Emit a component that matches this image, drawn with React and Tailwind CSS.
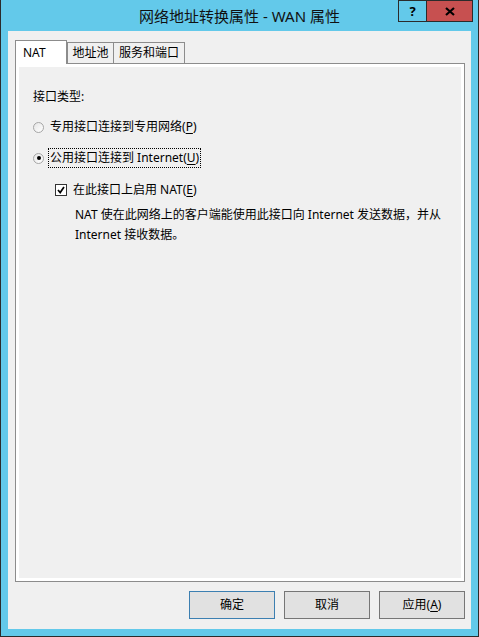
const FONT = "font-['Noto_Sans','Noto_Sans_CJK_SC',sans-serif]"

function Radio({ checked }) {
  return (
    <span className="flex h-[11px] w-[11px] shrink-0 items-center justify-center rounded-full border border-[#a6a6a6] bg-gradient-to-br from-[#e6e6e6] to-white">
      {checked && <span className="h-[4px] w-[4px] rounded-full bg-black" />}
    </span>
  )
}

function CheckBox() {
  return (
    <span className="flex h-[12px] w-[12px] shrink-0 items-center justify-center border border-[#333333] bg-white">
      <svg width="10" height="10" viewBox="0 0 10 10">
        <path d="M2 5 L4.2 7.5 L8 2" fill="none" stroke="#000" strokeWidth="1.7" />
      </svg>
    </span>
  )
}

function Key({ k }) {
  return (
    <>
      (<span className="underline underline-offset-2">{k}</span>)
    </>
  )
}

function Tab({ label, active, className = '' }) {
  if (active) {
    return (
      <div className={`relative z-10 -mb-px flex h-[24px] items-center border border-b-0 border-[#8c8c8c] bg-white pl-[7px] ${className}`}>
        {label}
      </div>
    )
  }
  return (
    <div className={`flex h-[21px] items-center justify-center border border-b-0 border-[#8c8c8c] bg-[#f0f0f0] ${className}`}>
      {label}
    </div>
  )
}

function DialogButton({ children, primary }) {
  return (
    <button
      className={`flex h-[28px] w-[86px] items-center justify-center border bg-[#e1e1e1] text-[12px] leading-[16px] ${
        primary ? 'border-[#3c7fb1]' : 'border-[#767676]'
      }`}
    >
      {children}
    </button>
  )
}

export default function App() {
  return (
    <div className={`flex h-[637px] w-[479px] flex-col border border-t-0 border-[#2b2b2b] bg-[#63c9ea] text-black ${FONT}`}>
      {/* caption */}
      <div className="relative flex h-[31px] items-center justify-center">
        <span className="text-[15px] leading-[20px] text-[#111]">网络地址转换属性 - WAN 属性</span>
        <div className="absolute right-[5px] top-0 flex h-[22px]">
          <div className="flex w-[29px] items-center justify-center border border-[#2b2b2b] text-[13px] font-bold leading-none">?</div>
          <div className="-ml-px flex w-[47px] items-center justify-center border border-[#2b2b2b] bg-[#c75050]">
            <svg width="10" height="9" viewBox="0 0 10 9">
              <path d="M1 1 L9 8 M9 1 L1 8" stroke="#000" strokeWidth="2.2" />
            </svg>
          </div>
        </div>
      </div>

      {/* client area */}
      <div className="mx-[7px] flex h-[598px] flex-col bg-[#f0f0f0] pl-[7px] pr-[6px] pt-[9px] text-[12px]">
        <div className="flex h-[23px] items-end">
          <Tab label="NAT" active className="w-[52px]" />
          <Tab label="地址池" className="w-[47px]" />
          <Tab label="服务和端口" className="-ml-px w-[72px]" />
        </div>

        <div className="flex h-[519px] flex-col border border-[#8c8c8c] bg-white p-[3px]">
          <div className="flex-1 bg-[#f0f0f0] pl-[14px] pt-[22px]">
            <div className="leading-[16px]">接口类型:</div>

            <div className="mt-[12px] flex h-[20px] items-center">
              <Radio />
              <span className="ml-[4px] border border-transparent px-px leading-[18px]">
                专用接口连接到专用网络<Key k="P" />
              </span>
            </div>

            <div className="mt-[11px] flex h-[20px] items-center">
              <Radio checked />
              <span className="ml-[4px] border border-dotted border-black px-px leading-[18px]">
                公用接口连接到 Internet<Key k="U" />
              </span>
            </div>

            <div className="ml-[22px] mt-[12px] flex h-[20px] items-center">
              <CheckBox />
              <span className="ml-[6px] leading-[18px]">
                在此接口上启用 NAT<Key k="E" />
              </span>
            </div>

            <p className="ml-[42px] mt-[5px] leading-[20px]">
              NAT 使在此网络上的客户端能使用此接口向 Internet 发送数据，并从
              <br />
              Internet 接收数据。
            </p>
          </div>
        </div>

        <div className="mt-[9px] flex justify-end gap-[9px]">
          <DialogButton primary>确定</DialogButton>
          <DialogButton>取消</DialogButton>
          <DialogButton>
            应用<Key k="A" />
          </DialogButton>
        </div>
      </div>
    </div>
  )
}
